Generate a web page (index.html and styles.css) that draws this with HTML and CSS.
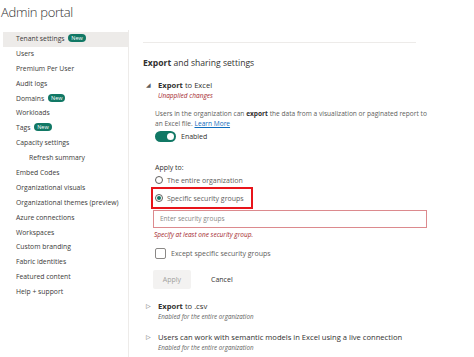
FILE: index.html
```html
<!DOCTYPE html>
<html lang="en">
<head>
    <meta charset="UTF-8">
    <title>Admin portal</title>
    <link rel="stylesheet" href="styles.css">
</head>
<body>

<h1 class="portal-title">Admin portal</h1>

<div class="layout">
    <nav class="sidebar">
        <div class="nav-item selected">Tenant settings <span class="badge">New</span></div>
        <div class="nav-item">Users</div>
        <div class="nav-item">Premium Per User</div>
        <div class="nav-item">Audit logs</div>
        <div class="nav-item">Domains <span class="badge">New</span></div>
        <div class="nav-item">Workloads</div>
        <div class="nav-item">Tags <span class="badge">New</span></div>
        <div class="nav-item">Capacity settings</div>
        <div class="nav-item sub">Refresh summary</div>
        <div class="nav-item">Embed Codes</div>
        <div class="nav-item">Organizational visuals</div>
        <div class="nav-item">Organizational themes (preview)</div>
        <div class="nav-item">Azure connections</div>
        <div class="nav-item">Workspaces</div>
        <div class="nav-item">Custom branding</div>
        <div class="nav-item">Fabric identities</div>
        <div class="nav-item">Featured content</div>
        <div class="nav-item">Help + support</div>
    </nav>

    <main class="content">
        <div class="top-rule"></div>
        <h2 class="section-title"><b>Export</b> and sharing settings</h2>

        <div class="setting open">
            <div class="setting-head">
                <span class="caret open-caret">&#9698;</span>
                <div>
                    <div class="setting-name"><b>Export</b> to Excel</div>
                    <div class="unapplied">Unapplied changes</div>
                </div>
            </div>
            <div class="setting-body">
                <div class="desc">
                    <div class="desc-line">Users in the organization can <b>export</b> the data from a visualization or paginated report to</div>
                    <div class="desc-line">an Excel file. <a href="#">Learn More</a></div>
                </div>

                <label class="toggle-row">
                    <span class="toggle"><span class="knob"></span></span>
                    Enabled
                </label>

                <div class="apply-label">Apply to:</div>
                <div class="radio-row"><span class="radio"></span>The entire organization</div>
                <div class="highlight">
                    <div class="radio-row"><span class="radio checked"></span>Specific security groups</div>
                </div>
                <div class="group-input">Enter security groups</div>
                <div class="error">Specify at least one security group.</div>

                <div class="check-row"><span class="checkbox"></span>Except specific security groups</div>

                <div class="actions">
                    <button class="btn-apply">Apply</button>
                    <button class="btn-cancel">Cancel</button>
                </div>
            </div>
        </div>

        <div class="setting">
            <div class="setting-head">
                <span class="caret">&#9655;</span>
                <div>
                    <div class="setting-name"><b>Export</b> to .csv</div>
                    <div class="status">Enabled for the entire organization</div>
                </div>
            </div>
        </div>

        <div class="setting">
            <div class="setting-head">
                <span class="caret">&#9655;</span>
                <div>
                    <div class="setting-name">Users can work with semantic models in Excel using a live connection</div>
                    <div class="status">Enabled for the entire organization</div>
                </div>
            </div>
        </div>
    </main>
</div>

</body>
</html>
```

FILE: styles.css
```css
body {
    font-family: 'Open Sans', 'Noto Sans', sans-serif;
    margin: 0;
    background: #fff;
    color: #323130;
    overflow: hidden;
}

.portal-title {
    font-size: 13px;
    font-weight: 300;
    margin: 0;
    padding: 3px 0 0 1px;
    height: 27px;
    letter-spacing: -0.3px;
}

.layout {
    display: flex;
    align-items: stretch;
    min-height: 330px;
}

.sidebar {
    width: 125px;
    padding: 2px 0 0 3px;
    border-right: 1px solid #edebe9;
}

.nav-item {
    font-size: 6.8px;
    height: 14.9px;
    line-height: 14.9px;
    padding-left: 13px;
    color: #3b3a39;
    white-space: nowrap;
}

.nav-item.selected {
    background: #edebe9;
}

.nav-item.sub {
    padding-left: 26px;
}

.badge {
    display: inline-block;
    background: #117865;
    color: #fff;
    font-size: 5.5px;
    line-height: 8px;
    height: 8px;
    padding: 0 3px;
    border-radius: 5px;
    margin-left: 2px;
    vertical-align: 1px;
}

.content {
    flex: 1;
    padding-left: 14px;
}

.top-rule {
    width: 273px;
    border-top: 1px solid #edebe9;
    margin-top: 12px;
}

.section-title {
    font-size: 8.6px;
    font-weight: 400;
    margin: 14px 0 10px;
}

.setting-head {
    display: flex;
    align-items: flex-start;
    gap: 6px;
}

.caret {
    font-size: 6px;
    color: #605e5c;
    width: 6px;
    padding-left: 3px;
    line-height: 12px;
}

.setting-name {
    font-size: 7.6px;
    line-height: 12px;
}

.setting-name b {
    font-weight: 700;
}

.unapplied,
.error {
    font-size: 6.5px;
    font-style: italic;
    color: #a4262c;
    line-height: 10px;
}

.setting-body {
    padding-left: 12px;
}

.desc {
    font-size: 6.6px;
    color: #605e5c;
    margin: 8px 0 3px;
}

.desc-line {
    height: 9.5px;
    line-height: 9.5px;
    white-space: nowrap;
}

.desc b {
    color: #323130;
}

.desc a {
    color: #0f6cbd;
    text-decoration: underline;
}

.toggle-row {
    display: flex;
    align-items: center;
    gap: 5px;
    font-size: 7px;
}

.toggle {
    width: 21px;
    height: 11px;
    border-radius: 6px;
    background: #117865;
    display: flex;
    align-items: center;
    justify-content: flex-end;
    padding: 0 2px;
    box-sizing: border-box;
}

.knob {
    width: 7px;
    height: 7px;
    border-radius: 50%;
    background: #fff;
}

.apply-label {
    font-size: 7px;
    margin-top: 21px;
    line-height: 10px;
}

.radio-row {
    display: flex;
    align-items: center;
    gap: 4px;
    font-size: 7px;
    color: #605e5c;
    height: 14px;
}

.radio {
    width: 8px;
    height: 8px;
    border: 1px solid #605e5c;
    border-radius: 50%;
    box-sizing: border-box;
    display: flex;
    align-items: center;
    justify-content: center;
}

.radio.checked::after {
    content: '';
    width: 4px;
    height: 4px;
    border-radius: 50%;
    background: #117865;
}

.highlight {
    width: 96px;
    border: 2px solid #e8141b;
    padding: 2px 0 2px 2px;
    margin-left: -4px;
}

.group-input {
    width: 274px;
    height: 18px;
    margin-top: 1px;
    border: 1px solid #dc8a8e;
    box-sizing: border-box;
    font-size: 6.5px;
    color: #8a8886;
    line-height: 16px;
    padding-left: 6px;
    margin-left: -2px;
}

.error {
    margin-top: 2px;
    margin-left: -1px;
}

.check-row {
    display: flex;
    align-items: center;
    gap: 5px;
    font-size: 7px;
    color: #605e5c;
    margin-top: 8px;
}

.checkbox {
    width: 11px;
    height: 11px;
    border: 1px solid #8a8886;
    border-radius: 2px;
    box-sizing: border-box;
}

.actions {
    display: flex;
    align-items: center;
    gap: 20px;
    margin: 11px 0 11px;
}

.btn-apply {
    width: 38px;
    height: 19px;
    border: none;
    border-radius: 2px;
    background: #f3f2f1;
    color: #a19f9d;
    font-family: inherit;
    font-size: 7px;
    margin-left: -2px;
}

.btn-cancel {
    border: none;
    background: none;
    color: #323130;
    font-family: inherit;
    font-size: 7px;
    padding: 0;
}

.setting + .setting {
    margin-top: 9px;
}

.status {
    font-size: 6.2px;
    font-style: italic;
    color: #605e5c;
    line-height: 10px;
}
```
